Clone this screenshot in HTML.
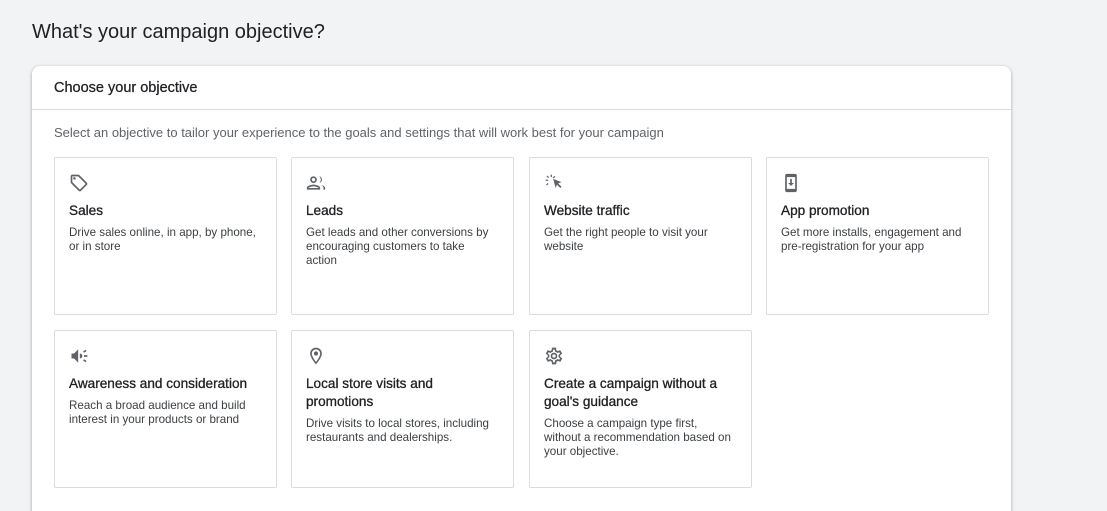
<!DOCTYPE html><html><head><style>
html,body{margin:0;width:1107px;height:511px;overflow:hidden}
body{background:#f1f3f4;font-family:"Liberation Sans",Arial,sans-serif;color:#202124;position:relative}
h1{position:absolute;left:32px;top:21px;margin:0;font-size:20px;font-weight:400;color:#202124}
.card{position:absolute;left:32px;top:66px;width:979px;height:460px;background:#fff;border-radius:8px;box-shadow:0 1px 2px rgba(60,64,67,.3),0 1px 3px 1px rgba(60,64,67,.15)}
.hd{height:43px;border-bottom:1px solid #dadce0;font-size:14.5px;font-weight:500;padding-left:22px;line-height:44px;-webkit-text-stroke:.25px #202124}
.sub{position:absolute;left:22px;top:59px;font-size:13px;color:#5f6368}
.t{position:absolute;width:221px;height:156px;border:1px solid #dadce0;border-radius:2px;background:#fff}
.t svg{position:absolute;left:14px;top:15px;width:20px;height:20px;fill:#5f6368}
.tt{position:absolute;left:14px;top:44px;width:190px;font-size:13.6px;line-height:18px;color:#202124;-webkit-text-stroke:.3px #202124}
.d{font-size:11.6px;line-height:14px;color:#3c4043;margin-top:6px;-webkit-text-stroke:0;width:205px;white-space:nowrap}
</style></head><body>
<h1>What's your campaign objective?</h1>
<div class="card"><div class="hd">Choose your objective</div>
<div class="sub">Select an objective to tailor your experience to the goals and settings that will work best for your campaign</div>
<div class="t" style="left:22px;top:91px"><svg viewBox="0 0 24 24"><path d="M21.4 11.6l-9-9C12.1 2.2 11.6 2 11 2H4c-1.1 0-2 .9-2 2v7c0 .6.2 1.1.6 1.4l9 9c.4.4.9.6 1.4.6s1.1-.2 1.4-.6l7-7c.4-.4.6-.9.6-1.4s-.2-1.1-.6-1.4zM13 20l-9-9V4h7l9 9-7 7zM6.5 5A1.5 1.5 0 1 0 6.5 8 1.5 1.5 0 1 0 6.5 5z"/></svg><div class="tt">Sales<div class="d">Drive sales online, in app, by phone,<br>or in store</div></div></div>
<div class="t" style="left:259px;top:91px"><svg viewBox="0 0 24 24"><path d="M9 12a4 4 0 1 0 0-8 4 4 0 0 0 0 8zm0 2c-2.7 0-8 1.300-8 4v2h16v-2c0-2.7-5.3-4-8-4zM16 4.1a4 4 0 0 1 0 7.8c1.1-1 1.8-2.4 1.8-3.9s-.7-2.9-1.8-3.9zm1.6 10.1c1.9.9 3.4 2 3.4 3.8v2h2v-2c0-1.9-2.6-3.2-5.4-3.8z"/><path fill="#fff" d="M9 6a2 2 0 1 1 0 4 2 2 0 0 1 0-4zM3 18c.2-.7 3.3-2 6-2s5.8 1.3 6 2z"/></svg><div class="tt">Leads<div class="d">Get leads and other conversions by<br>encouraging customers to take<br>action</div></div></div>
<div class="t" style="left:497px;top:91px"><svg viewBox="0 0 24 24"><path d="M11 7l10 4-4 1.5 4 4-1.5 1.5-4-4L14 18zM8 2h1.5v3H8zM2 8h3v1.5H2zM4 3l2.2 2.2-1 1L3 4zM12.5 3.5l1 1-2 2-1-1zM4.5 12l1 1-2 2-1-1z"/></svg><div class="tt">Website traffic<div class="d">Get the right people to visit your<br>website</div></div></div>
<div class="t" style="left:734px;top:91px"><svg viewBox="0 0 24 24"><path d="M17 1H7C5.9 1 5 1.9 5 3v18c0 1.1.9 2 2 2h10c1.1 0 2-.9 2-2V3c0-1.1-.9-2-2-2zm0 18H7V5h10v14zm-4-12h-2v5H8.5l3.5 3.5 3.5-3.5H13z"/></svg><div class="tt">App promotion<div class="d">Get more installs, engagement and<br>pre-registration for your app</div></div></div>
<div class="t" style="left:22px;top:264px"><svg viewBox="0 0 24 24"><path d="M3 9v6h3l5 5V4L6 9zm15 2h4v2h-4zM17 6.5l3-2 1 1.6-3 2zM17 17.5l3 2 1-1.6-3-2zM13 9v6a3 3 0 0 0 0-6z"/></svg><div class="tt">Awareness and consideration<div class="d">Reach a broad audience and build<br>interest in your products or brand</div></div></div>
<div class="t" style="left:259px;top:264px"><svg viewBox="0 0 24 24"><path d="M12 2C8.1 2 5 5.1 5 9c0 5.2 7 13 7 13s7-7.8 7-13c0-3.9-3.1-7-7-7zm0 17.1C10 16.6 7 12.2 7 9c0-2.8 2.2-5 5-5s5 2.2 5 5c0 3.2-3 7.6-5 10.1zM12 6.5a2.5 2.5 0 1 0 0 5 2.5 2.5 0 0 0 0-5z"/></svg><div class="tt">Local store visits and promotions<div class="d">Drive visits to local stores, including<br>restaurants and dealerships.</div></div></div>
<div class="t" style="left:497px;top:264px"><svg viewBox="0 0 24 24"><path d="M19.4 13c0-.3.1-.6.1-1s0-.7-.1-1l2.1-1.6c.2-.1.2-.4.1-.6l-2-3.5c-.1-.2-.4-.3-.6-.2l-2.5 1c-.5-.4-1.1-.7-1.7-1L14.5 2.4c0-.2-.2-.4-.5-.4h-4c-.2 0-.4.2-.5.4L9.1 5.1c-.6.3-1.2.6-1.7 1l-2.5-1c-.2-.1-.5 0-.6.2l-2 3.5c-.1.2-.1.5.1.6L4.6 11c0 .3-.1.7-.1 1s0 .7.1 1l-2.1 1.6c-.2.1-.2.4-.1.6l2 3.5c.1.2.4.3.6.2l2.5-1c.5.4 1.1.7 1.7 1l.4 2.7c0 .2.2.4.5.4h4c.2 0 .4-.2.5-.4l.4-2.7c.6-.3 1.2-.6 1.7-1l2.5 1c.2.1.5 0 .6-.2l2-3.5c.1-.2.1-.5-.1-.6zM17.5 12.5l-.1.9 1.9 1.4-1 1.7-2.2-.9-.7.6c-.4.3-.9.6-1.4.8l-.8.3-.3 2.4h-1.9l-.3-2.4-.8-.3c-.5-.2-1-.5-1.4-.8l-.7-.6-2.2.9-1-1.7 1.9-1.4-.1-.9V11.5l.1-.9-1.9-1.4 1-1.7 2.2.9.7-.6c.4-.3.9-.6 1.4-.8l.8-.3.3-2.4h1.9l.3 2.4.8.3c.5.2 1 .5 1.4.8l.7.6 2.2-.9 1 1.7-1.9 1.4.1.9zM12 8a4 4 0 1 0 0 8 4 4 0 0 0 0-8zm0 6a2 2 0 1 1 0-4 2 2 0 0 1 0 4z"/></svg><div class="tt">Create a campaign without a goal's guidance<div class="d">Choose a campaign type first,<br>without a recommendation based on<br>your objective.</div></div></div>
</div>
</body></html>
